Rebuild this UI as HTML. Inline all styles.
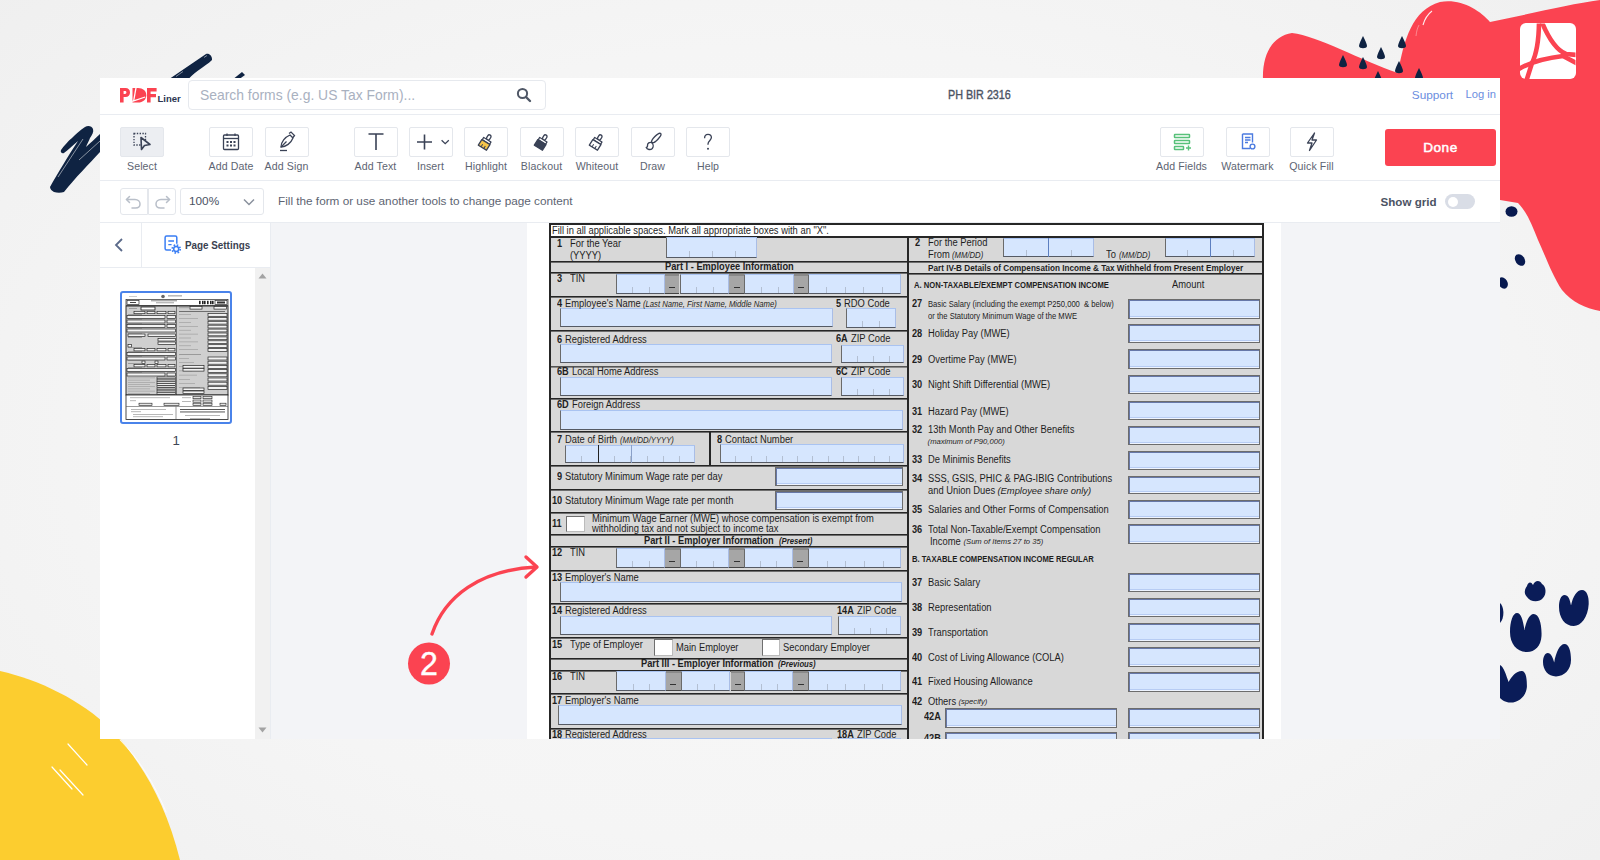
<!DOCTYPE html><html><head><meta charset="utf-8"><style>
*{margin:0;padding:0;box-sizing:border-box}
html,body{width:1600px;height:860px;overflow:hidden}
body{position:relative;background:radial-gradient(ellipse 75% 85% at 50% 52%, #f8f8f8 0%, #f5f5f5 55%, #eeeeee 100%);font-family:"Liberation Sans",sans-serif;color:#333}
.a{position:absolute}
.t{position:absolute;white-space:nowrap}
#app{position:absolute;left:100px;top:78px;width:1400px;height:661px;background:#fff;overflow:hidden}
.tb{position:absolute;top:49px;width:44px;height:30px;border:1px solid #e6e8ed;border-radius:3px;background:#fff}
.tl{position:absolute;top:80px;width:80px;text-align:center;font-size:10.6px;color:#5b6270;line-height:14px}
</style></head><body><svg class="a" style="left:0;top:0" width="1600" height="860" viewBox="0 0 1600 860">
<!-- yellow blob -->
<path d="M0 671 C40 680 80 700 110 728 C140 760 165 800 180 860 L0 860 Z" fill="#fccd2f"/>
<!-- navy strokes top-left -->
<path d="M50 187 C58 173 68 156 78 141 C73 145 68 150 64 153 C62 154 60 152 61 150 C64 146 68 141 72 138 C76 134 80 130 85 127 C88 125 92 126 93 129 C94 132 92 135 90 138 C89 141 87 144 86 147 C90 143 95 139 100 134 L100 152 C90 163 75 178 64 192 C61 193 57 193 54 192 C52 191 50 189 50 187 Z" fill="#0f2342"/>
<path d="M58 177 L83 139" stroke="#fff" stroke-width="0.6" opacity="0.85"/>
<path d="M79 160 L100 141" stroke="#fff" stroke-width="0.6" opacity="0.85"/>
<path d="M170 78.5 L206 54 C209 53 212.5 56 212 60 C208 64 204 66 201 68.5 C196 72 192 75 189 78.5 Z" fill="#0f2342"/><path d="M176 76.5 L183 71.5 M204 57.5 L207 55.5" stroke="#fff" stroke-width="0.6" opacity="0.8"/>
<path d="M232 80 L242 72 L245 75 L238 80 Z" fill="#0f2342"/>
<!-- red blob top-right -->
<path d="M1263 80 C1262 55 1272 36 1292 33 C1318 36 1360 60 1398 73 C1404 40 1412 10 1440 2 C1460 -2 1480 10 1490 22 C1530 14 1570 4 1600 0 L1600 311 C1585 308 1572 302 1562 290 C1552 275 1545 255 1538 240 C1532 225 1527 212 1518 203 L1500 200 L1500 80 Z" fill="#fb4351"/>
<rect x="1520" y="23" width="56" height="56" rx="6" fill="#fff"/>
<path d="M1423 25 C1424.5 19.5 1427.5 14.5 1432 11" stroke="#fff" stroke-width="1.1" fill="none" opacity="0.9"/>
<path d="M1416 36 C1416.5 31 1417.5 28 1419 25" stroke="#fff" stroke-width="0.6" fill="none" opacity="0.6"/>
<!-- navy drops -->
<g fill="#0f2342">
<path d="M1363 36 C1365 40 1367 44 1367 46 C1367 49 1359 49 1359 46 C1359 44 1361 40 1363 36 Z"/><path d="M1402 36 C1404 40 1406 44 1406 46 C1406 49 1398 49 1398 46 C1398 44 1400 40 1402 36 Z"/><path d="M1381 47 C1383 51 1385 55 1385 57 C1385 60 1377 60 1377 57 C1377 55 1379 51 1381 47 Z"/><path d="M1343 55 C1345 59 1347 63 1347 65 C1347 68 1339 68 1339 65 C1339 63 1341 59 1343 55 Z"/><path d="M1363 57 C1365 61 1367 65 1367 67 C1367 70 1359 70 1359 67 C1359 65 1361 61 1363 57 Z"/><path d="M1399 61 C1401 65 1403 69 1403 71 C1403 74 1395 74 1395 71 C1395 69 1397 65 1399 61 Z"/><path d="M1419 68 C1421 72 1423 76 1423 78 C1423 81 1415 81 1415 78 C1415 76 1417 72 1419 68 Z"/><path d="M1378 71 C1380 75 1382 79 1382 81 C1382 84 1374 84 1374 81 C1374 79 1376 75 1378 71 Z"/><ellipse cx="1511.5" cy="211.5" rx="6" ry="5.3" fill="#07194f"/><ellipse cx="1520" cy="260" rx="4.6" ry="6.3" transform="rotate(-35 1520 260)" fill="#07194f"/><ellipse cx="1503" cy="283" rx="4.5" ry="6" transform="rotate(-30 1503 283)" fill="#07194f"/>
</g>
</svg>
<div class="a" style="left:100px;top:78px;width:1400px;height:661px;background:#fff"></div>
<div class="a" style="left:100px;top:114px;width:1400px;height:1px;background:#e9ecf1"></div>
<div class="a" style="left:100px;top:180px;width:1400px;height:1px;background:#e9ecf1"></div>
<div class="a" style="left:100px;top:222px;width:1400px;height:1px;background:#e9ecf1"></div>
<svg class="a" style="left:115px;top:84px" width="50" height="22" viewBox="115 84 50 22">
<path d="M120 88 H125.5 C128.3 88 130 89.8 130 92.4 C130 95 128.3 96.9 125.5 96.9 H123.6 V102.5 H120 Z M123.6 91 V93.9 H125 C125.9 93.9 126.4 93.3 126.4 92.45 C126.4 91.6 125.9 91 125 91 Z" fill="#fb4351"/>
<path d="M132.5 88 H138 C143 88 146.3 91 146.3 95.2 C146.3 99.5 143 102.5 138 102.5 H132.5 Z" fill="#fb4351"/>
<path d="M135.3 88 L136.6 88 L134.3 101 L133 101 Z" fill="#fff"/>
<path d="M136.7 88.5 L139.5 96.5 L134.9 97.8 Z" fill="#fff" opacity="0"/>
<path d="M132 100.8 L145 96.4 L145.4 97.4 L132.4 101.9 Z" fill="#fff"/>
<path d="M147 88 H156.6 V91.4 H150.6 V94 H156 V97.2 H150.6 V102.5 H147 Z" fill="#fb4351"/>
</svg>
<div class="t" style="left:157.5px;top:92.80px;font-size:9.5px;line-height:11.4px;color:#2c3650;font-weight:bold;">Liner</div>
<div class="a" style="left:188px;top:80px;width:358px;height:30px;border:1px solid #e6e9ee;border-radius:4px;background:#fff"></div>
<div class="t" style="left:200px;top:87.16px;font-size:13.9px;line-height:16.68px;color:#a9b1bf;">Search forms (e.g. US Tax Form)...</div>
<svg class="a" style="left:516px;top:87px" width="16" height="16" viewBox="0 0 16 16"><circle cx="6.5" cy="6.5" r="4.6" fill="none" stroke="#4f5766" stroke-width="2"/><path d="M10 10 L14 14" stroke="#4f5766" stroke-width="2.4" stroke-linecap="round"/></svg>
<div class="t" style="left:947.8px;top:88.40px;font-size:12px;line-height:14.4px;transform:scaleX(0.897);transform-origin:0 50%;color:#4b5363;-webkit-text-stroke:0.35px #4b5363;">PH BIR 2316</div>
<div class="t" style="left:1411.8px;top:88.22px;font-size:11.8px;line-height:14.16px;color:#6b8ee0;">Support</div>
<div class="t" style="left:1465.5px;top:88.28px;font-size:11.2px;line-height:13.44px;color:#6b8ee0;">Log in</div>
<div class="a" style="left:120px;top:127px;width:44px;height:30px;border:1px solid #e4e7ec;border-radius:2px;background:#eceef2"></div>
<svg class="a" style="left:120px;top:127px" width="44" height="30" viewBox="0 0 44 30"><rect x="14" y="6.5" width="11.5" height="11.5" stroke="#3a4256" fill="none" stroke-width="1.3" stroke-dasharray="1.4 1.4"/><path d="M21 10.5 L30 17.5 L24.5 18.5 L21.5 22.5 Z" fill="#eceef2" stroke="#3a4256" stroke-width="1.6" stroke-linejoin="round"/></svg>
<div class="t" style="left:102px;top:159.3px;width:80px;text-align:center;font-size:10.6px;letter-spacing:0.1px;line-height:14px;color:#5d6472">Select</div>
<div class="a" style="left:209px;top:127px;width:44px;height:30px;border:1px solid #e4e7ec;border-radius:2px;background:#fff"></div>
<svg class="a" style="left:209px;top:127px" width="44" height="30" viewBox="0 0 44 30"><rect x="14.5" y="8" width="15" height="14.5" rx="1" stroke="#3a4256" fill="none" stroke-width="1.3" stroke-width="1.6"/><path d="M14.5 11.5 H29.5" stroke="#3a4256" fill="none" stroke-width="1.3" stroke-width="1.4"/><path d="M18 6.5 V9 M26 6.5 V9" stroke="#3a4256" fill="none" stroke-width="1.3"/><g fill="#3a4256"><rect x="17.5" y="14" width="2" height="2"/><rect x="21" y="14" width="2" height="2"/><rect x="24.5" y="14" width="2" height="2"/><rect x="17.5" y="17.5" width="2" height="2"/><rect x="21" y="17.5" width="2" height="2"/><rect x="24.5" y="17.5" width="2" height="2"/></g></svg>
<div class="t" style="left:191px;top:159.3px;width:80px;text-align:center;font-size:10.6px;letter-spacing:0.1px;line-height:14px;color:#5d6472">Add Date</div>
<div class="a" style="left:264.5px;top:127px;width:44px;height:30px;border:1px solid #e4e7ec;border-radius:2px;background:#fff"></div>
<svg class="a" style="left:264.5px;top:127px" width="44" height="30" viewBox="0 0 44 30"><path d="M16 20 C16 15 20 10 25 8 L28 11 C26 16 21 20 16 20 Z" stroke="#3a4256" fill="none" stroke-width="1.3" stroke-width="1.5"/><path d="M24 6.5 L26 5 L29.5 8.5 L28 10.5" stroke="#3a4256" fill="none" stroke-width="1.3" stroke-width="1.5"/><path d="M16 20 L21.5 14.5" stroke="#3a4256" fill="none" stroke-width="1.3"/><path d="M15 23.5 H22" stroke="#3a4256" fill="none" stroke-width="1.3" stroke-width="1.5"/></svg>
<div class="t" style="left:246.5px;top:159.3px;width:80px;text-align:center;font-size:10.6px;letter-spacing:0.1px;line-height:14px;color:#5d6472">Add Sign</div>
<div class="a" style="left:353.5px;top:127px;width:44px;height:30px;border:1px solid #e4e7ec;border-radius:2px;background:#fff"></div>
<svg class="a" style="left:353.5px;top:127px" width="44" height="30" viewBox="0 0 44 30"><path d="M14.5 7 H29.5 M22 7 V23" stroke="#3a4256" stroke-width="1.6" fill="none"/></svg>
<div class="t" style="left:335.5px;top:159.3px;width:80px;text-align:center;font-size:10.6px;letter-spacing:0.1px;line-height:14px;color:#5d6472">Add Text</div>
<div class="a" style="left:408.5px;top:127px;width:44px;height:30px;border:1px solid #e4e7ec;border-radius:2px;background:#fff"></div>
<svg class="a" style="left:408.5px;top:127px" width="44" height="30" viewBox="0 0 44 30"><path d="M8 15 H23 M15.5 7.5 V22.5" stroke="#3a4256" stroke-width="1.6" fill="none"/><path d="M32.6 13.2 L36.2 16.6 L39.8 13.2" stroke="#3a4256" fill="none" stroke-width="1.3" stroke-width="1.5"/></svg>
<div class="t" style="left:390.5px;top:159.3px;width:80px;text-align:center;font-size:10.6px;letter-spacing:0.1px;line-height:14px;color:#5d6472">Insert</div>
<div class="a" style="left:464px;top:127px;width:44px;height:30px;border:1px solid #e4e7ec;border-radius:2px;background:#fff"></div>
<svg class="a" style="left:464px;top:127px" width="44" height="30" viewBox="0 0 44 30"><g transform="translate(22.2 14.6) rotate(32)" stroke="#3a4256" stroke-width="1.3" stroke-linejoin="round"><rect x="-1.7" y="-7.6" width="3.4" height="5.4" rx="1.7" fill="#fff"/><rect x="-4.3" y="-2.2" width="8.6" height="2.8" fill="#fff"/><path d="M-4.8 0.6 H4.8 V7.2 H-4.8 Z" fill="#f6c54a"/><path d="M-1.6 7 V4.2 M1.6 7 V4.2" stroke-width="1"/></g></svg>
<div class="t" style="left:446px;top:159.3px;width:80px;text-align:center;font-size:10.6px;letter-spacing:0.1px;line-height:14px;color:#5d6472">Highlight</div>
<div class="a" style="left:519.5px;top:127px;width:44px;height:30px;border:1px solid #e4e7ec;border-radius:2px;background:#fff"></div>
<svg class="a" style="left:519.5px;top:127px" width="44" height="30" viewBox="0 0 44 30"><g transform="translate(22.2 14.6) rotate(32)" stroke="#3a4256" stroke-width="1.3" stroke-linejoin="round"><rect x="-1.7" y="-7.6" width="3.4" height="5.4" rx="1.7" fill="#fff"/><rect x="-4.3" y="-2.2" width="8.6" height="2.8" fill="#fff"/><path d="M-4.8 0.6 H4.8 V7.2 H-4.8 Z" fill="#3a4256"/></g></svg>
<div class="t" style="left:501.5px;top:159.3px;width:80px;text-align:center;font-size:10.6px;letter-spacing:0.1px;line-height:14px;color:#5d6472">Blackout</div>
<div class="a" style="left:575px;top:127px;width:44px;height:30px;border:1px solid #e4e7ec;border-radius:2px;background:#fff"></div>
<svg class="a" style="left:575px;top:127px" width="44" height="30" viewBox="0 0 44 30"><g transform="translate(22.2 14.6) rotate(32)" stroke="#3a4256" stroke-width="1.3" stroke-linejoin="round"><rect x="-1.7" y="-7.6" width="3.4" height="5.4" rx="1.7" fill="#fff"/><rect x="-4.3" y="-2.2" width="8.6" height="2.8" fill="#fff"/><path d="M-4.8 0.6 H4.8 V7.2 H-4.8 Z" fill="#fff"/><path d="M-1.6 7 V4.2 M1.6 7 V4.2" stroke-width="1"/></g></svg>
<div class="t" style="left:557px;top:159.3px;width:80px;text-align:center;font-size:10.6px;letter-spacing:0.1px;line-height:14px;color:#5d6472">Whiteout</div>
<div class="a" style="left:630.5px;top:127px;width:44px;height:30px;border:1px solid #e4e7ec;border-radius:2px;background:#fff"></div>
<svg class="a" style="left:630.5px;top:127px" width="44" height="30" viewBox="0 0 44 30"><g stroke="#3a4256" stroke-width="1.4" fill="none" stroke-linejoin="round"><ellipse cx="25.3" cy="11" rx="6.2" ry="2" transform="rotate(-45 25.3 11)"/><path d="M20.8 15.6 C18.5 14.8 16.3 16.3 16.5 18.6 C16.6 19.8 15.8 20.5 15.2 20.4 C16 22.8 19.6 23.1 21.3 21.4 C22.6 20 22.4 17.4 20.8 15.6 Z"/></g></svg>
<div class="t" style="left:612.5px;top:159.3px;width:80px;text-align:center;font-size:10.6px;letter-spacing:0.1px;line-height:14px;color:#5d6472">Draw</div>
<div class="a" style="left:686px;top:127px;width:44px;height:30px;border:1px solid #e4e7ec;border-radius:2px;background:#fff"></div>
<svg class="a" style="left:686px;top:127px" width="44" height="30" viewBox="0 0 44 30"><path d="M18.6 11.3 C18.6 8.6 20.3 7.4 22 7.4 C23.9 7.4 25.4 8.8 25.4 10.6 C25.4 13.2 22.1 13.8 22 17 V17.8" stroke="#3a4256" fill="none" stroke-width="1.3" stroke-width="1.7"/><circle cx="22" cy="21.7" r="1" fill="#3a4256"/></svg>
<div class="t" style="left:668px;top:159.3px;width:80px;text-align:center;font-size:10.6px;letter-spacing:0.1px;line-height:14px;color:#5d6472">Help</div>
<div class="a" style="left:1159.5px;top:127px;width:44px;height:30px;border:1px solid #e4e7ec;border-radius:2px;background:#fff"></div>
<svg class="a" style="left:1159.5px;top:127px" width="44" height="30" viewBox="0 0 44 30"><g stroke="#58c17a" stroke-width="1.5" fill="none"><rect x="14.5" y="7.5" width="15" height="3" rx=".5"/><rect x="14.5" y="13.5" width="15" height="3" rx=".5"/><rect x="14.5" y="19.5" width="9" height="3" rx=".5"/></g><path d="M26 21 H31 M28.5 18.5 V23.5" stroke="#58c17a" stroke-width="1.4"/></svg>
<div class="t" style="left:1141.5px;top:159.3px;width:80px;text-align:center;font-size:10.6px;letter-spacing:0.1px;line-height:14px;color:#5d6472">Add Fields</div>
<div class="a" style="left:1225.5px;top:127px;width:44px;height:30px;border:1px solid #e4e7ec;border-radius:2px;background:#fff"></div>
<svg class="a" style="left:1225.5px;top:127px" width="44" height="30" viewBox="0 0 44 30"><g stroke="#4b7be0" stroke-width="1.4" fill="none"><path d="M16.5 7 H26.5 V15.5 M24 21.5 H16.5 V7"/><path d="M19 10.5 H24.5 M19 13 H24.5 M19 15.5 H22"/><circle cx="26.5" cy="19.5" r="2.4"/></g></svg>
<div class="t" style="left:1207.5px;top:159.3px;width:80px;text-align:center;font-size:10.6px;letter-spacing:0.1px;line-height:14px;color:#5d6472">Watermark</div>
<div class="a" style="left:1289.5px;top:127px;width:44px;height:30px;border:1px solid #e4e7ec;border-radius:2px;background:#fff"></div>
<svg class="a" style="left:1289.5px;top:127px" width="44" height="30" viewBox="0 0 44 30"><path d="M24.5 6 L17.5 16 H22 L19.5 23.5 L26.5 13 H22 Z" stroke="#3a4256" fill="none" stroke-width="1.3" stroke-width="1.4" stroke-linejoin="round"/></svg>
<div class="t" style="left:1271.5px;top:159.3px;width:80px;text-align:center;font-size:10.6px;letter-spacing:0.1px;line-height:14px;color:#5d6472">Quick Fill</div>
<div class="a" style="left:1385px;top:129px;width:111px;height:37px;background:#fb4351;border-radius:3px;color:#fff;font-size:13.6px;letter-spacing:0.55px;-webkit-text-stroke:0.5px #fff;line-height:37px;text-align:center">Done</div>
<div class="a" style="left:120px;top:188px;width:28px;height:27px;border:1px solid #e4e7ec;border-radius:3px 0 0 3px"></div>
<div class="a" style="left:148px;top:188px;width:28px;height:27px;border:1px solid #e4e7ec;border-radius:0 3px 3px 0"></div>
<svg class="a" style="left:120px;top:188px" width="56" height="27" viewBox="0 0 56 27"><g stroke="#b9bfc9" stroke-width="1.5" fill="none" stroke-linecap="round"><path d="M9.5 8.5 L6.5 11.5 L9.5 14.5"/><path d="M7 11.5 H15 C18 11.5 20 13.5 20 16 C20 18.5 18 20 15.5 20 H12"/><path d="M46.5 8.5 L49.5 11.5 L46.5 14.5"/><path d="M49 11.5 H41 C38 11.5 36 13.5 36 16 C36 18.5 38 20 40.5 20 H44"/></g></svg>
<div class="a" style="left:180px;top:188px;width:84px;height:27px;border:1px solid #e4e7ec;border-radius:3px"></div>
<div class="t" style="left:189px;top:194.42px;font-size:11.8px;line-height:14.16px;color:#4b5363;">100%</div>
<svg class="a" style="left:242px;top:197px" width="14" height="10" viewBox="0 0 14 10"><path d="M2 2.5 L7 7.5 L12 2.5" stroke="#8a919d" stroke-width="1.5" fill="none"/></svg>
<div class="t" style="left:278px;top:194.45px;font-size:11.75px;line-height:14.1px;color:#5d6472;">Fill the form or use another tools to change page content</div>
<div class="t" style="left:1380.5px;top:194.54px;font-size:11.6px;line-height:13.92px;color:#4b5363;font-weight:bold;">Show grid</div>
<div class="a" style="left:1445px;top:194px;width:30px;height:15px;background:#d9dde6;border-radius:8px"></div>
<div class="a" style="left:1448px;top:196.5px;width:10px;height:10px;background:#fff;border-radius:50%"></div>
<div class="a" style="left:270px;top:223px;width:1px;height:516px;background:#e9ecf1"></div>
<div class="a" style="left:141px;top:223px;width:1px;height:45px;background:#e9ecf1"></div>
<div class="a" style="left:100px;top:267px;width:170px;height:1px;background:#e9ecf1"></div>
<svg class="a" style="left:112px;top:237px" width="14" height="16" viewBox="0 0 14 16"><path d="M10 2 L4 8 L10 14" stroke="#5b6a8a" stroke-width="1.8" fill="none"/></svg>
<svg class="a" style="left:160px;top:232px" width="26" height="26" viewBox="160 232 26 26"><g stroke="#3a7ef4" fill="none"><path d="M176.8 243.8 V237.6 C176.8 236.7 176.2 236.1 175.3 236.1 H166.6 C165.7 236.1 165.1 236.7 165.1 237.6 V248.6 C165.1 249.5 165.7 250.1 166.6 250.1 H171" stroke-width="1.5"/><path d="M168.3 241 H174 M168.3 244.6 H171.6" stroke-width="1.4"/><circle cx="176.2" cy="249" r="2.5" stroke-width="1.5"/><circle cx="176.2" cy="249" r="4" stroke-width="1.7" stroke-dasharray="1.6 1.55"/></g></svg>
<div class="t" style="left:185px;top:239.14px;font-size:10.6px;line-height:12.72px;transform:scaleX(0.930);transform-origin:0 50%;color:#3a4150;font-weight:bold;">Page Settings</div>
<div class="a" style="left:255px;top:268px;width:15px;height:471px;background:#f1f1f1"></div>
<svg class="a" style="left:258px;top:273px" width="9" height="6" viewBox="0 0 9 6"><path d="M0.5 5.5 L4.5 0.5 L8.5 5.5 Z" fill="#a3a3a3"/></svg>
<svg class="a" style="left:258px;top:727px" width="9" height="6" viewBox="0 0 9 6"><path d="M0.5 0.5 L4.5 5.5 L8.5 0.5 Z" fill="#a3a3a3"/></svg>
<div class="t" style="left:172.5px;top:433.08px;font-size:13.2px;line-height:15.84px;color:#3f4654;">1</div>
<div class="a" style="left:271px;top:223px;width:1229px;height:516px;background:#f3f4f7"></div>
<div class="a" style="left:527px;top:223px;width:754px;height:516px;background:#fff"></div>
<div class="a" style="left:271px;top:223px;width:1229px;height:516px;overflow:hidden"><div class="a" style="left:-271px;top:-223px;width:1600px;height:860px">
<div class="a" style="left:551px;top:237px;width:356px;height:502px;background:#d8d8d8"></div>
<div class="a" style="left:909px;top:237px;width:353px;height:502px;background:#d8d8d8"></div>
<div class="a" style="left:549px;top:223px;width:715px;height:2px;background:#262626"></div>
<div class="a" style="left:549px;top:223px;width:2px;height:516px;background:#262626"></div>
<div class="a" style="left:1262px;top:223px;width:2px;height:516px;background:#262626"></div>
<div class="a" style="left:549px;top:236px;width:715px;height:2px;background:#262626"></div>
<div class="a" style="left:907px;top:236px;width:2px;height:503px;background:#262626"></div>
<div class="a" style="left:551px;top:261px;width:356px;height:1px;background:#262626"></div>
<div class="a" style="left:551px;top:262px;width:356px;height:1px;background:#6e6e6e"></div>
<div class="a" style="left:551px;top:272px;width:356px;height:1px;background:#262626"></div>
<div class="a" style="left:551px;top:273px;width:356px;height:1px;background:#6e6e6e"></div>
<div class="a" style="left:551px;top:296px;width:356px;height:1px;background:#262626"></div>
<div class="a" style="left:551px;top:297px;width:356px;height:1px;background:#6e6e6e"></div>
<div class="a" style="left:551px;top:330px;width:356px;height:1px;background:#262626"></div>
<div class="a" style="left:551px;top:331px;width:356px;height:1px;background:#6e6e6e"></div>
<div class="a" style="left:551px;top:366px;width:356px;height:1px;background:#555"></div>
<div class="a" style="left:551px;top:367px;width:356px;height:1px;background:#8a8a8a"></div>
<div class="a" style="left:551px;top:398px;width:356px;height:1px;background:#262626"></div>
<div class="a" style="left:551px;top:399px;width:356px;height:1px;background:#6e6e6e"></div>
<div class="a" style="left:551px;top:431px;width:356px;height:1px;background:#262626"></div>
<div class="a" style="left:551px;top:432px;width:356px;height:1px;background:#6e6e6e"></div>
<div class="a" style="left:551px;top:465px;width:356px;height:1px;background:#262626"></div>
<div class="a" style="left:551px;top:466px;width:356px;height:1px;background:#6e6e6e"></div>
<div class="a" style="left:551px;top:489px;width:356px;height:1px;background:#262626"></div>
<div class="a" style="left:551px;top:490px;width:356px;height:1px;background:#6e6e6e"></div>
<div class="a" style="left:551px;top:512px;width:356px;height:1px;background:#262626"></div>
<div class="a" style="left:551px;top:513px;width:356px;height:1px;background:#6e6e6e"></div>
<div class="a" style="left:551px;top:534px;width:356px;height:1px;background:#262626"></div>
<div class="a" style="left:551px;top:535px;width:356px;height:1px;background:#6e6e6e"></div>
<div class="a" style="left:551px;top:546px;width:356px;height:1px;background:#262626"></div>
<div class="a" style="left:551px;top:547px;width:356px;height:1px;background:#6e6e6e"></div>
<div class="a" style="left:551px;top:570px;width:356px;height:1px;background:#262626"></div>
<div class="a" style="left:551px;top:571px;width:356px;height:1px;background:#6e6e6e"></div>
<div class="a" style="left:551px;top:603px;width:356px;height:1px;background:#262626"></div>
<div class="a" style="left:551px;top:604px;width:356px;height:1px;background:#6e6e6e"></div>
<div class="a" style="left:551px;top:637px;width:356px;height:1px;background:#262626"></div>
<div class="a" style="left:551px;top:638px;width:356px;height:1px;background:#6e6e6e"></div>
<div class="a" style="left:551px;top:658px;width:356px;height:1px;background:#262626"></div>
<div class="a" style="left:551px;top:659px;width:356px;height:1px;background:#6e6e6e"></div>
<div class="a" style="left:551px;top:670px;width:356px;height:1px;background:#262626"></div>
<div class="a" style="left:551px;top:671px;width:356px;height:1px;background:#6e6e6e"></div>
<div class="a" style="left:551px;top:693px;width:356px;height:1px;background:#262626"></div>
<div class="a" style="left:551px;top:694px;width:356px;height:1px;background:#6e6e6e"></div>
<div class="a" style="left:551px;top:728px;width:356px;height:1px;background:#262626"></div>
<div class="a" style="left:551px;top:729px;width:356px;height:1px;background:#6e6e6e"></div>
<div class="a" style="left:909px;top:261px;width:353px;height:1px;background:#262626"></div>
<div class="a" style="left:909px;top:262px;width:353px;height:1px;background:#6e6e6e"></div>
<div class="a" style="left:909px;top:273px;width:353px;height:1px;background:#262626"></div>
<div class="a" style="left:909px;top:274px;width:353px;height:1px;background:#6e6e6e"></div>
<div class="a" style="left:709px;top:431px;width:2px;height:35px;background:#262626"></div>
<div class="a" style="left:665.7px;top:237.4px;width:91.7px;height:20.3px;background:#d6e6fe;border-left:1px solid #6a6a6a;border-top:1px solid #a9c3f1;border-bottom:1px solid #555a64;border-right:1px solid #a9bde6;"></div>
<div class="a" style="left:688.6px;top:250.7px;width:1px;height:6px;background:#b3bfd2"></div>
<div class="a" style="left:711.5px;top:250.7px;width:1px;height:6px;background:#b3bfd2"></div>
<div class="a" style="left:734.5px;top:250.7px;width:1px;height:6px;background:#b3bfd2"></div>
<div class="a" style="left:615.9px;top:273.6px;width:49.4px;height:20.7px;background:#d6e6fe;border-left:1px solid #6a6a6a;border-top:1px solid #a9c3f1;border-bottom:1px solid #555a64;border-right:1px solid #a9bde6;"></div>
<div class="a" style="left:632.4px;top:287.3px;width:1px;height:6px;background:#b3bfd2"></div>
<div class="a" style="left:648.8px;top:287.3px;width:1px;height:6px;background:#b3bfd2"></div>
<div class="a" style="left:665.3px;top:273.6px;width:14.2px;height:20.7px;background:#a6a6a6;border-top:2px solid #8a8a8a;border-bottom:1px solid #444"></div>
<div class="a" style="left:669.4px;top:287.3px;width:6px;height:1px;background:#333"></div>
<div class="a" style="left:679.5px;top:273.6px;width:49.5px;height:20.7px;background:#d6e6fe;border-left:1px solid #6a6a6a;border-top:1px solid #a9c3f1;border-bottom:1px solid #555a64;border-right:1px solid #a9bde6;"></div>
<div class="a" style="left:696.0px;top:287.3px;width:1px;height:6px;background:#b3bfd2"></div>
<div class="a" style="left:712.5px;top:287.3px;width:1px;height:6px;background:#b3bfd2"></div>
<div class="a" style="left:729px;top:273.6px;width:15.4px;height:20.7px;background:#a6a6a6;border-top:2px solid #8a8a8a;border-bottom:1px solid #444"></div>
<div class="a" style="left:733.7px;top:287.3px;width:6px;height:1px;background:#333"></div>
<div class="a" style="left:744.4px;top:273.6px;width:49.6px;height:20.7px;background:#d6e6fe;border-left:1px solid #6a6a6a;border-top:1px solid #a9c3f1;border-bottom:1px solid #555a64;border-right:1px solid #a9bde6;"></div>
<div class="a" style="left:760.9px;top:287.3px;width:1px;height:6px;background:#b3bfd2"></div>
<div class="a" style="left:777.5px;top:287.3px;width:1px;height:6px;background:#b3bfd2"></div>
<div class="a" style="left:794px;top:273.6px;width:13.6px;height:20.7px;background:#a6a6a6;border-top:2px solid #8a8a8a;border-bottom:1px solid #444"></div>
<div class="a" style="left:797.8px;top:287.3px;width:6px;height:1px;background:#333"></div>
<div class="a" style="left:807.6px;top:273.6px;width:93.0px;height:20.7px;background:#d6e6fe;border-left:1px solid #6a6a6a;border-top:1px solid #a9c3f1;border-bottom:1px solid #555a64;border-right:1px solid #a9bde6;"></div>
<div class="a" style="left:826.2px;top:287.3px;width:1px;height:6px;background:#b3bfd2"></div>
<div class="a" style="left:844.8px;top:287.3px;width:1px;height:6px;background:#b3bfd2"></div>
<div class="a" style="left:863.4px;top:287.3px;width:1px;height:6px;background:#b3bfd2"></div>
<div class="a" style="left:882.0px;top:287.3px;width:1px;height:6px;background:#b3bfd2"></div>
<div class="a" style="left:559.6px;top:308.2px;width:273.1px;height:19.2px;background:#d6e6fe;border-left:1px solid #6a6a6a;border-top:1px solid #a9c3f1;border-bottom:1px solid #555a64;border-right:1px solid #a9bde6;"></div>
<div class="a" style="left:845.5px;top:308px;width:50.3px;height:19.5px;background:#d6e6fe;border-left:1px solid #6a6a6a;border-top:1px solid #a9c3f1;border-bottom:1px solid #555a64;border-right:1px solid #a9bde6;"></div>
<div class="a" style="left:862.3px;top:320.5px;width:1px;height:6px;background:#b3bfd2"></div>
<div class="a" style="left:879.0px;top:320.5px;width:1px;height:6px;background:#b3bfd2"></div>
<div class="a" style="left:559.8px;top:344.2px;width:272.7px;height:18.8px;background:#d6e6fe;border-left:1px solid #6a6a6a;border-top:1px solid #a9c3f1;border-bottom:1px solid #555a64;border-right:1px solid #a9bde6;"></div>
<div class="a" style="left:841.3px;top:344.5px;width:63.0px;height:18.5px;background:#d6e6fe;border-left:1px solid #6a6a6a;border-top:1px solid #a9c3f1;border-bottom:1px solid #555a64;border-right:1px solid #a9bde6;"></div>
<div class="a" style="left:857.0px;top:356px;width:1px;height:6px;background:#b3bfd2"></div>
<div class="a" style="left:872.8px;top:356px;width:1px;height:6px;background:#b3bfd2"></div>
<div class="a" style="left:888.5px;top:356px;width:1px;height:6px;background:#b3bfd2"></div>
<div class="a" style="left:559.8px;top:376.8px;width:272.7px;height:19.4px;background:#d6e6fe;border-left:1px solid #6a6a6a;border-top:1px solid #a9c3f1;border-bottom:1px solid #555a64;border-right:1px solid #a9bde6;"></div>
<div class="a" style="left:841.3px;top:377px;width:63.0px;height:18.5px;background:#d6e6fe;border-left:1px solid #6a6a6a;border-top:1px solid #a9c3f1;border-bottom:1px solid #555a64;border-right:1px solid #a9bde6;"></div>
<div class="a" style="left:857.0px;top:388.5px;width:1px;height:6px;background:#b3bfd2"></div>
<div class="a" style="left:872.8px;top:388.5px;width:1px;height:6px;background:#b3bfd2"></div>
<div class="a" style="left:888.5px;top:388.5px;width:1px;height:6px;background:#b3bfd2"></div>
<div class="a" style="left:559.8px;top:409.6px;width:343.7px;height:20.1px;background:#d6e6fe;border-left:1px solid #6a6a6a;border-top:1px solid #a9c3f1;border-bottom:1px solid #555a64;border-right:1px solid #a9bde6;"></div>
<div class="a" style="left:565px;top:444.5px;width:130.4px;height:18.3px;background:#d6e6fe;border-left:1px solid #6a6a6a;border-top:1px solid #a9c3f1;border-bottom:1px solid #555a64;border-right:1px solid #a9bde6;"></div>
<div class="a" style="left:581.3px;top:455.8px;width:1px;height:6px;background:#b3bfd2"></div>
<div class="a" style="left:597.6px;top:455.8px;width:1px;height:6px;background:#b3bfd2"></div>
<div class="a" style="left:613.9px;top:455.8px;width:1px;height:6px;background:#b3bfd2"></div>
<div class="a" style="left:630.2px;top:455.8px;width:1px;height:6px;background:#b3bfd2"></div>
<div class="a" style="left:646.5px;top:455.8px;width:1px;height:6px;background:#b3bfd2"></div>
<div class="a" style="left:662.8px;top:455.8px;width:1px;height:6px;background:#b3bfd2"></div>
<div class="a" style="left:679.1px;top:455.8px;width:1px;height:6px;background:#b3bfd2"></div>
<div class="a" style="left:598px;top:444.5px;width:1.2px;height:18.3px;background:#222"></div>
<div class="a" style="left:630.5px;top:444.5px;width:1px;height:18.3px;background:#8aa0c8"></div>
<div class="a" style="left:720px;top:444.2px;width:184.4px;height:19.2px;background:#d6e6fe;border-left:1px solid #6a6a6a;border-top:1px solid #a9c3f1;border-bottom:1px solid #555a64;border-right:1px solid #a9bde6;"></div>
<div class="a" style="left:735.4px;top:456.4px;width:1px;height:6px;background:#b3bfd2"></div>
<div class="a" style="left:750.7px;top:456.4px;width:1px;height:6px;background:#b3bfd2"></div>
<div class="a" style="left:766.1px;top:456.4px;width:1px;height:6px;background:#b3bfd2"></div>
<div class="a" style="left:781.5px;top:456.4px;width:1px;height:6px;background:#b3bfd2"></div>
<div class="a" style="left:796.8px;top:456.4px;width:1px;height:6px;background:#b3bfd2"></div>
<div class="a" style="left:812.2px;top:456.4px;width:1px;height:6px;background:#b3bfd2"></div>
<div class="a" style="left:827.6px;top:456.4px;width:1px;height:6px;background:#b3bfd2"></div>
<div class="a" style="left:842.9px;top:456.4px;width:1px;height:6px;background:#b3bfd2"></div>
<div class="a" style="left:858.3px;top:456.4px;width:1px;height:6px;background:#b3bfd2"></div>
<div class="a" style="left:873.7px;top:456.4px;width:1px;height:6px;background:#b3bfd2"></div>
<div class="a" style="left:889.0px;top:456.4px;width:1px;height:6px;background:#b3bfd2"></div>
<div class="a" style="left:775.3px;top:466.8px;width:127.3px;height:19.6px;background:#d6e6fe;border:1px solid #6c6c6c;box-shadow:inset 1px 1px 0 #6778a8, inset 0 -1px 0 #eef4ff, inset 0 -2px 0 #b7ccf3;"></div>
<div class="a" style="left:775.3px;top:490.9px;width:127.3px;height:19.5px;background:#d6e6fe;border:1px solid #6c6c6c;box-shadow:inset 1px 1px 0 #6778a8, inset 0 -1px 0 #eef4ff, inset 0 -2px 0 #b7ccf3;"></div>
<div class="a" style="left:566px;top:515.5px;width:19px;height:16.5px;background:#fff;border:1px solid #6f6f6f;border-right-color:#bbb;border-bottom-color:#bbb"></div>
<div class="a" style="left:615.6px;top:548px;width:49.4px;height:19.5px;background:#d6e6fe;border-left:1px solid #6a6a6a;border-top:1px solid #a9c3f1;border-bottom:1px solid #555a64;border-right:1px solid #a9bde6;"></div>
<div class="a" style="left:632.1px;top:560.5px;width:1px;height:6px;background:#b3bfd2"></div>
<div class="a" style="left:648.5px;top:560.5px;width:1px;height:6px;background:#b3bfd2"></div>
<div class="a" style="left:665px;top:548px;width:14.7px;height:19.5px;background:#a6a6a6;border-top:2px solid #8a8a8a;border-bottom:1px solid #444"></div>
<div class="a" style="left:669.4px;top:560.9px;width:6px;height:1px;background:#333"></div>
<div class="a" style="left:679.7px;top:548px;width:49.6px;height:19.5px;background:#d6e6fe;border-left:1px solid #6a6a6a;border-top:1px solid #a9c3f1;border-bottom:1px solid #555a64;border-right:1px solid #a9bde6;"></div>
<div class="a" style="left:696.2px;top:560.5px;width:1px;height:6px;background:#b3bfd2"></div>
<div class="a" style="left:712.8px;top:560.5px;width:1px;height:6px;background:#b3bfd2"></div>
<div class="a" style="left:729.3px;top:548px;width:14.3px;height:19.5px;background:#a6a6a6;border-top:2px solid #8a8a8a;border-bottom:1px solid #444"></div>
<div class="a" style="left:733.5px;top:560.9px;width:6px;height:1px;background:#333"></div>
<div class="a" style="left:743.6px;top:548px;width:49.2px;height:19.5px;background:#d6e6fe;border-left:1px solid #6a6a6a;border-top:1px solid #a9c3f1;border-bottom:1px solid #555a64;border-right:1px solid #a9bde6;"></div>
<div class="a" style="left:760.0px;top:560.5px;width:1px;height:6px;background:#b3bfd2"></div>
<div class="a" style="left:776.4px;top:560.5px;width:1px;height:6px;background:#b3bfd2"></div>
<div class="a" style="left:792.8px;top:548px;width:15.2px;height:19.5px;background:#a6a6a6;border-top:2px solid #8a8a8a;border-bottom:1px solid #444"></div>
<div class="a" style="left:797.4px;top:560.9px;width:6px;height:1px;background:#333"></div>
<div class="a" style="left:808px;top:548px;width:93.4px;height:19.5px;background:#d6e6fe;border-left:1px solid #6a6a6a;border-top:1px solid #a9c3f1;border-bottom:1px solid #555a64;border-right:1px solid #a9bde6;"></div>
<div class="a" style="left:826.7px;top:560.5px;width:1px;height:6px;background:#b3bfd2"></div>
<div class="a" style="left:845.4px;top:560.5px;width:1px;height:6px;background:#b3bfd2"></div>
<div class="a" style="left:864.0px;top:560.5px;width:1px;height:6px;background:#b3bfd2"></div>
<div class="a" style="left:882.7px;top:560.5px;width:1px;height:6px;background:#b3bfd2"></div>
<div class="a" style="left:559.8px;top:582.1px;width:342.7px;height:19.5px;background:#d6e6fe;border-left:1px solid #6a6a6a;border-top:1px solid #a9c3f1;border-bottom:1px solid #555a64;border-right:1px solid #a9bde6;"></div>
<div class="a" style="left:559.8px;top:615.6px;width:272.2px;height:19.2px;background:#d6e6fe;border-left:1px solid #6a6a6a;border-top:1px solid #a9c3f1;border-bottom:1px solid #555a64;border-right:1px solid #a9bde6;"></div>
<div class="a" style="left:838.3px;top:616px;width:63.1px;height:18.8px;background:#d6e6fe;border-left:1px solid #6a6a6a;border-top:1px solid #a9c3f1;border-bottom:1px solid #555a64;border-right:1px solid #a9bde6;"></div>
<div class="a" style="left:854.1px;top:627.8px;width:1px;height:6px;background:#b3bfd2"></div>
<div class="a" style="left:869.8px;top:627.8px;width:1px;height:6px;background:#b3bfd2"></div>
<div class="a" style="left:885.6px;top:627.8px;width:1px;height:6px;background:#b3bfd2"></div>
<div class="a" style="left:654px;top:638.6px;width:19px;height:17px;background:#fff;border:1px solid #6f6f6f;border-right-color:#bbb;border-bottom-color:#bbb"></div>
<div class="a" style="left:762.4px;top:638.6px;width:18px;height:17px;background:#fff;border:1px solid #6f6f6f;border-right-color:#bbb;border-bottom-color:#bbb"></div>
<div class="a" style="left:616.2px;top:671.4px;width:49.5px;height:19.6px;background:#d6e6fe;border-left:1px solid #6a6a6a;border-top:1px solid #a9c3f1;border-bottom:1px solid #555a64;border-right:1px solid #a9bde6;"></div>
<div class="a" style="left:632.7px;top:684px;width:1px;height:6px;background:#b3bfd2"></div>
<div class="a" style="left:649.2px;top:684px;width:1px;height:6px;background:#b3bfd2"></div>
<div class="a" style="left:665.7px;top:671.4px;width:15.0px;height:19.6px;background:#a6a6a6;border-top:2px solid #8a8a8a;border-bottom:1px solid #444"></div>
<div class="a" style="left:670.2px;top:684.3px;width:6px;height:1px;background:#333"></div>
<div class="a" style="left:680.7px;top:671.4px;width:49.8px;height:19.6px;background:#d6e6fe;border-left:1px solid #6a6a6a;border-top:1px solid #a9c3f1;border-bottom:1px solid #555a64;border-right:1px solid #a9bde6;"></div>
<div class="a" style="left:697.3px;top:684px;width:1px;height:6px;background:#b3bfd2"></div>
<div class="a" style="left:713.9px;top:684px;width:1px;height:6px;background:#b3bfd2"></div>
<div class="a" style="left:730.5px;top:671.4px;width:13.9px;height:19.6px;background:#a6a6a6;border-top:2px solid #8a8a8a;border-bottom:1px solid #444"></div>
<div class="a" style="left:734.5px;top:684.3px;width:6px;height:1px;background:#333"></div>
<div class="a" style="left:744.4px;top:671.4px;width:48.9px;height:19.6px;background:#d6e6fe;border-left:1px solid #6a6a6a;border-top:1px solid #a9c3f1;border-bottom:1px solid #555a64;border-right:1px solid #a9bde6;"></div>
<div class="a" style="left:760.7px;top:684px;width:1px;height:6px;background:#b3bfd2"></div>
<div class="a" style="left:777.0px;top:684px;width:1px;height:6px;background:#b3bfd2"></div>
<div class="a" style="left:793.3px;top:671.4px;width:14.7px;height:19.6px;background:#a6a6a6;border-top:2px solid #8a8a8a;border-bottom:1px solid #444"></div>
<div class="a" style="left:797.6px;top:684.3px;width:6px;height:1px;background:#333"></div>
<div class="a" style="left:808px;top:671.4px;width:92.5px;height:19.6px;background:#d6e6fe;border-left:1px solid #6a6a6a;border-top:1px solid #a9c3f1;border-bottom:1px solid #555a64;border-right:1px solid #a9bde6;"></div>
<div class="a" style="left:826.5px;top:684px;width:1px;height:6px;background:#b3bfd2"></div>
<div class="a" style="left:845.0px;top:684px;width:1px;height:6px;background:#b3bfd2"></div>
<div class="a" style="left:863.5px;top:684px;width:1px;height:6px;background:#b3bfd2"></div>
<div class="a" style="left:882.0px;top:684px;width:1px;height:6px;background:#b3bfd2"></div>
<div class="a" style="left:558.1px;top:705.2px;width:344.2px;height:20.3px;background:#d6e6fe;border-left:1px solid #6a6a6a;border-top:1px solid #a9c3f1;border-bottom:1px solid #555a64;border-right:1px solid #a9bde6;"></div>
<div class="a" style="left:559.8px;top:738px;width:272.2px;height:22px;background:#d6e6fe;border-left:1px solid #6a6a6a;border-top:1px solid #a9c3f1;border-bottom:1px solid #555a64;border-right:1px solid #a9bde6;"></div>
<div class="a" style="left:838.3px;top:738px;width:63.1px;height:22px;background:#d6e6fe;border-left:1px solid #6a6a6a;border-top:1px solid #a9c3f1;border-bottom:1px solid #555a64;border-right:1px solid #a9bde6;"></div>
<div class="t" style="left:552px;top:225.00px;font-size:10.0px;line-height:12.0px;transform:scaleX(0.937);transform-origin:0 50%;color:#1e1e1e;">Fill in all applicable spaces. Mark all appropriate boxes with an "X".</div>
<div class="t" style="left:557px;top:237.50px;font-size:10.0px;line-height:12.0px;transform:scaleX(0.920);transform-origin:0 50%;color:#1e1e1e;font-weight:bold;">1</div>
<div class="t" style="left:569.8px;top:237.50px;font-size:10.0px;line-height:12.0px;transform:scaleX(0.937);transform-origin:0 50%;color:#1e1e1e;">For the Year</div>
<div class="t" style="left:569.8px;top:250.10px;font-size:10.0px;line-height:12.0px;transform:scaleX(0.937);transform-origin:0 50%;color:#1e1e1e;">(YYYY)</div>
<div class="t" style="left:664.5px;top:261.06px;font-size:10.4px;line-height:12.48px;transform:scaleX(0.892);transform-origin:0 50%;color:#1e1e1e;font-weight:bold;">Part I - Employee Information</div>
<div class="t" style="left:557px;top:273.10px;font-size:10.0px;line-height:12.0px;transform:scaleX(0.920);transform-origin:0 50%;color:#1e1e1e;font-weight:bold;">3</div>
<div class="t" style="left:570px;top:273.10px;font-size:10.0px;line-height:12.0px;transform:scaleX(0.937);transform-origin:0 50%;color:#1e1e1e;">TIN</div>
<div class="t" style="left:556.5px;top:298.20px;font-size:10.0px;line-height:12.0px;transform:scaleX(0.920);transform-origin:0 50%;color:#1e1e1e;font-weight:bold;">4</div>
<div class="t" style="left:565px;top:298.20px;font-size:10.0px;line-height:12.0px;transform:scaleX(0.937);transform-origin:0 50%;color:#1e1e1e;">Employee's Name</div>
<div class="t" style="left:643px;top:299.88px;font-size:8.2px;line-height:9.84px;transform:scaleX(0.940);transform-origin:0 50%;color:#1e1e1e;font-style:italic;">(Last Name, First Name, Middle Name)</div>
<div class="t" style="left:835.8px;top:298.30px;font-size:10.0px;line-height:12.0px;transform:scaleX(0.920);transform-origin:0 50%;color:#1e1e1e;font-weight:bold;">5</div>
<div class="t" style="left:843.5px;top:298.30px;font-size:10.0px;line-height:12.0px;transform:scaleX(0.937);transform-origin:0 50%;color:#1e1e1e;">RDO Code</div>
<div class="t" style="left:557px;top:333.50px;font-size:10.0px;line-height:12.0px;transform:scaleX(0.920);transform-origin:0 50%;color:#1e1e1e;font-weight:bold;">6</div>
<div class="t" style="left:565px;top:333.50px;font-size:10.0px;line-height:12.0px;transform:scaleX(0.937);transform-origin:0 50%;color:#1e1e1e;">Registered Address</div>
<div class="t" style="left:835.8px;top:333.20px;font-size:10.0px;line-height:12.0px;transform:scaleX(0.920);transform-origin:0 50%;color:#1e1e1e;font-weight:bold;">6A</div>
<div class="t" style="left:851px;top:333.20px;font-size:10.0px;line-height:12.0px;transform:scaleX(0.937);transform-origin:0 50%;color:#1e1e1e;">ZIP Code</div>
<div class="t" style="left:557px;top:366.20px;font-size:10.0px;line-height:12.0px;transform:scaleX(0.920);transform-origin:0 50%;color:#1e1e1e;font-weight:bold;">6B</div>
<div class="t" style="left:572px;top:366.20px;font-size:10.0px;line-height:12.0px;transform:scaleX(0.937);transform-origin:0 50%;color:#1e1e1e;">Local Home Address</div>
<div class="t" style="left:835.8px;top:366.00px;font-size:10.0px;line-height:12.0px;transform:scaleX(0.920);transform-origin:0 50%;color:#1e1e1e;font-weight:bold;">6C</div>
<div class="t" style="left:851px;top:366.00px;font-size:10.0px;line-height:12.0px;transform:scaleX(0.937);transform-origin:0 50%;color:#1e1e1e;">ZIP Code</div>
<div class="t" style="left:557px;top:399.40px;font-size:10.0px;line-height:12.0px;transform:scaleX(0.920);transform-origin:0 50%;color:#1e1e1e;font-weight:bold;">6D</div>
<div class="t" style="left:572px;top:399.40px;font-size:10.0px;line-height:12.0px;transform:scaleX(0.937);transform-origin:0 50%;color:#1e1e1e;">Foreign Address</div>
<div class="t" style="left:557px;top:434.30px;font-size:10.0px;line-height:12.0px;transform:scaleX(0.920);transform-origin:0 50%;color:#1e1e1e;font-weight:bold;">7</div>
<div class="t" style="left:565px;top:434.30px;font-size:10.0px;line-height:12.0px;transform:scaleX(0.937);transform-origin:0 50%;color:#1e1e1e;">Date of Birth</div>
<div class="t" style="left:620px;top:435.98px;font-size:8.2px;line-height:9.84px;transform:scaleX(0.940);transform-origin:0 50%;color:#1e1e1e;font-style:italic;">(MM/DD/YYYY)</div>
<div class="t" style="left:716.8px;top:434.30px;font-size:10.0px;line-height:12.0px;transform:scaleX(0.920);transform-origin:0 50%;color:#1e1e1e;font-weight:bold;">8</div>
<div class="t" style="left:724.5px;top:434.30px;font-size:10.0px;line-height:12.0px;transform:scaleX(0.937);transform-origin:0 50%;color:#1e1e1e;">Contact Number</div>
<div class="t" style="left:557px;top:471.40px;font-size:10.0px;line-height:12.0px;transform:scaleX(0.920);transform-origin:0 50%;color:#1e1e1e;font-weight:bold;">9</div>
<div class="t" style="left:565px;top:471.40px;font-size:10.0px;line-height:12.0px;transform:scaleX(0.937);transform-origin:0 50%;color:#1e1e1e;">Statutory Minimum Wage rate per day</div>
<div class="t" style="left:552.3px;top:495.00px;font-size:10.0px;line-height:12.0px;transform:scaleX(0.920);transform-origin:0 50%;color:#1e1e1e;font-weight:bold;">10</div>
<div class="t" style="left:565px;top:495.00px;font-size:10.0px;line-height:12.0px;transform:scaleX(0.937);transform-origin:0 50%;color:#1e1e1e;">Statutory Minimum Wage rate per month</div>
<div class="t" style="left:552.3px;top:517.60px;font-size:10.0px;line-height:12.0px;transform:scaleX(0.920);transform-origin:0 50%;color:#1e1e1e;font-weight:bold;">11</div>
<div class="t" style="left:592.4px;top:512.50px;font-size:10.0px;line-height:12.0px;transform:scaleX(0.937);transform-origin:0 50%;color:#1e1e1e;">Minimum Wage Earner (MWE) whose compensation is exempt from</div>
<div class="t" style="left:592.4px;top:523.40px;font-size:10.0px;line-height:12.0px;transform:scaleX(0.937);transform-origin:0 50%;color:#1e1e1e;">withholding tax and not subject to income tax</div>
<div class="t" style="left:644.4px;top:534.86px;font-size:10.4px;line-height:12.48px;transform:scaleX(0.892);transform-origin:0 50%;color:#1e1e1e;font-weight:bold;">Part II - Employer Information</div>
<div class="t" style="left:779px;top:536.78px;font-size:8.2px;line-height:9.84px;transform:scaleX(0.940);transform-origin:0 50%;color:#1e1e1e;font-weight:bold;font-style:italic;">(Present)</div>
<div class="t" style="left:552.3px;top:547.30px;font-size:10.0px;line-height:12.0px;transform:scaleX(0.920);transform-origin:0 50%;color:#1e1e1e;font-weight:bold;">12</div>
<div class="t" style="left:570.3px;top:547.30px;font-size:10.0px;line-height:12.0px;transform:scaleX(0.937);transform-origin:0 50%;color:#1e1e1e;">TIN</div>
<div class="t" style="left:552.3px;top:571.70px;font-size:10.0px;line-height:12.0px;transform:scaleX(0.920);transform-origin:0 50%;color:#1e1e1e;font-weight:bold;">13</div>
<div class="t" style="left:565px;top:571.70px;font-size:10.0px;line-height:12.0px;transform:scaleX(0.937);transform-origin:0 50%;color:#1e1e1e;">Employer's Name</div>
<div class="t" style="left:552.3px;top:605.20px;font-size:10.0px;line-height:12.0px;transform:scaleX(0.920);transform-origin:0 50%;color:#1e1e1e;font-weight:bold;">14</div>
<div class="t" style="left:565px;top:605.20px;font-size:10.0px;line-height:12.0px;transform:scaleX(0.937);transform-origin:0 50%;color:#1e1e1e;">Registered Address</div>
<div class="t" style="left:836.5px;top:605.20px;font-size:10.0px;line-height:12.0px;transform:scaleX(0.920);transform-origin:0 50%;color:#1e1e1e;font-weight:bold;">14A</div>
<div class="t" style="left:857px;top:605.20px;font-size:10.0px;line-height:12.0px;transform:scaleX(0.937);transform-origin:0 50%;color:#1e1e1e;">ZIP Code</div>
<div class="t" style="left:552.3px;top:638.70px;font-size:10.0px;line-height:12.0px;transform:scaleX(0.920);transform-origin:0 50%;color:#1e1e1e;font-weight:bold;">15</div>
<div class="t" style="left:570.3px;top:638.70px;font-size:10.0px;line-height:12.0px;transform:scaleX(0.937);transform-origin:0 50%;color:#1e1e1e;">Type of Employer</div>
<div class="t" style="left:676.2px;top:641.80px;font-size:10.0px;line-height:12.0px;transform:scaleX(0.937);transform-origin:0 50%;color:#1e1e1e;">Main Employer</div>
<div class="t" style="left:783.1px;top:641.80px;font-size:10.0px;line-height:12.0px;transform:scaleX(0.937);transform-origin:0 50%;color:#1e1e1e;">Secondary Employer</div>
<div class="t" style="left:640.6px;top:658.16px;font-size:10.4px;line-height:12.48px;transform:scaleX(0.892);transform-origin:0 50%;color:#1e1e1e;font-weight:bold;">Part III - Employer Information</div>
<div class="t" style="left:778px;top:660.08px;font-size:8.2px;line-height:9.84px;transform:scaleX(0.940);transform-origin:0 50%;color:#1e1e1e;font-weight:bold;font-style:italic;">(Previous)</div>
<div class="t" style="left:552.3px;top:671.00px;font-size:10.0px;line-height:12.0px;transform:scaleX(0.920);transform-origin:0 50%;color:#1e1e1e;font-weight:bold;">16</div>
<div class="t" style="left:570.3px;top:671.00px;font-size:10.0px;line-height:12.0px;transform:scaleX(0.937);transform-origin:0 50%;color:#1e1e1e;">TIN</div>
<div class="t" style="left:552.3px;top:695.40px;font-size:10.0px;line-height:12.0px;transform:scaleX(0.920);transform-origin:0 50%;color:#1e1e1e;font-weight:bold;">17</div>
<div class="t" style="left:565px;top:695.40px;font-size:10.0px;line-height:12.0px;transform:scaleX(0.937);transform-origin:0 50%;color:#1e1e1e;">Employer's Name</div>
<div class="t" style="left:552.3px;top:729.00px;font-size:10.0px;line-height:12.0px;transform:scaleX(0.920);transform-origin:0 50%;color:#1e1e1e;font-weight:bold;">18</div>
<div class="t" style="left:565px;top:729.00px;font-size:10.0px;line-height:12.0px;transform:scaleX(0.937);transform-origin:0 50%;color:#1e1e1e;">Registered Address</div>
<div class="t" style="left:836.5px;top:729.00px;font-size:10.0px;line-height:12.0px;transform:scaleX(0.920);transform-origin:0 50%;color:#1e1e1e;font-weight:bold;">18A</div>
<div class="t" style="left:857px;top:729.00px;font-size:10.0px;line-height:12.0px;transform:scaleX(0.937);transform-origin:0 50%;color:#1e1e1e;">ZIP Code</div>
<div class="t" style="left:914.75px;top:237.40px;font-size:10.0px;line-height:12.0px;transform:scaleX(0.920);transform-origin:0 50%;color:#1e1e1e;font-weight:bold;">2</div>
<div class="t" style="left:927.75px;top:237.40px;font-size:10.0px;line-height:12.0px;transform:scaleX(0.937);transform-origin:0 50%;color:#1e1e1e;">For the Period</div>
<div class="t" style="left:927.75px;top:248.90px;font-size:10.0px;line-height:12.0px;transform:scaleX(0.937);transform-origin:0 50%;color:#1e1e1e;">From</div>
<div class="t" style="left:952px;top:250.58px;font-size:8.2px;line-height:9.84px;transform:scaleX(0.940);transform-origin:0 50%;color:#1e1e1e;font-style:italic;">(MM/DD)</div>
<div class="a" style="left:1003px;top:238px;width:90.8px;height:19.3px;background:#d6e6fe;border-left:1px solid #6a6a6a;border-top:1px solid #a9c3f1;border-bottom:1px solid #555a64;border-right:1px solid #a9bde6;"></div>
<div class="a" style="left:1025.7px;top:250.3px;width:1px;height:6px;background:#b3bfd2"></div>
<div class="a" style="left:1071px;top:250.3px;width:1px;height:6px;background:#b3bfd2"></div>
<div class="a" style="left:1048px;top:238px;width:1.2px;height:19.3px;background:#5d7fc0"></div>
<div class="t" style="left:1105.6px;top:248.90px;font-size:10.0px;line-height:12.0px;transform:scaleX(0.937);transform-origin:0 50%;color:#1e1e1e;">To</div>
<div class="t" style="left:1119px;top:250.58px;font-size:8.2px;line-height:9.84px;transform:scaleX(0.940);transform-origin:0 50%;color:#1e1e1e;font-style:italic;">(MM/DD)</div>
<div class="a" style="left:1164.6px;top:238px;width:90.8px;height:19.3px;background:#d6e6fe;border-left:1px solid #6a6a6a;border-top:1px solid #a9c3f1;border-bottom:1px solid #555a64;border-right:1px solid #a9bde6;"></div>
<div class="a" style="left:1187.3px;top:250.3px;width:1px;height:6px;background:#b3bfd2"></div>
<div class="a" style="left:1232.6px;top:250.3px;width:1px;height:6px;background:#b3bfd2"></div>
<div class="a" style="left:1209.5px;top:238px;width:1.2px;height:19.3px;background:#5d7fc0"></div>
<div class="t" style="left:927.75px;top:261.58px;font-size:9.7px;line-height:11.64px;transform:scaleX(0.842);transform-origin:0 50%;color:#1e1e1e;font-weight:bold;">Part IV-B Details of Compensation Income &amp; Tax Withheld from Present Employer</div>
<div class="t" style="left:914px;top:279.54px;font-size:8.6px;line-height:10.32px;transform:scaleX(0.889);transform-origin:0 50%;color:#1e1e1e;font-weight:bold;">A. NON-TAXABLE/EXEMPT COMPENSATION INCOME</div>
<div class="t" style="left:1172px;top:279.00px;font-size:10.0px;line-height:12.0px;transform:scaleX(0.937);transform-origin:0 50%;color:#1e1e1e;">Amount</div>
<div class="t" style="left:912px;top:298.00px;font-size:10.0px;line-height:12.0px;transform:scaleX(0.920);transform-origin:0 50%;color:#1e1e1e;font-weight:bold;">27</div>
<div class="t" style="left:927.6px;top:299.34px;font-size:8.6px;line-height:10.32px;transform:scaleX(0.888);transform-origin:0 50%;color:#1e1e1e;">Basic Salary (including the exempt P250,000&nbsp; &amp; below)</div>
<div class="t" style="left:927.6px;top:310.84px;font-size:8.6px;line-height:10.32px;transform:scaleX(0.888);transform-origin:0 50%;color:#1e1e1e;">or the Statutory Minimum Wage of the MWE</div>
<div class="a" style="left:1128px;top:299px;width:132px;height:19.7px;background:#d6e6fe;border:1px solid #6c6c6c;box-shadow:inset 1px 1px 0 #6778a8, inset 0 -1px 0 #eef4ff, inset 0 -2px 0 #b7ccf3;"></div>
<div class="t" style="left:912px;top:328.30px;font-size:10.0px;line-height:12.0px;transform:scaleX(0.920);transform-origin:0 50%;color:#1e1e1e;font-weight:bold;">28</div>
<div class="t" style="left:927.6px;top:328.30px;font-size:10.0px;line-height:12.0px;transform:scaleX(0.937);transform-origin:0 50%;color:#1e1e1e;">Holiday Pay (MWE)</div>
<div class="a" style="left:1128px;top:323.5px;width:132px;height:19.5px;background:#d6e6fe;border:1px solid #6c6c6c;box-shadow:inset 1px 1px 0 #6778a8, inset 0 -1px 0 #eef4ff, inset 0 -2px 0 #b7ccf3;"></div>
<div class="t" style="left:912px;top:353.50px;font-size:10.0px;line-height:12.0px;transform:scaleX(0.920);transform-origin:0 50%;color:#1e1e1e;font-weight:bold;">29</div>
<div class="t" style="left:927.6px;top:353.50px;font-size:10.0px;line-height:12.0px;transform:scaleX(0.937);transform-origin:0 50%;color:#1e1e1e;">Overtime Pay (MWE)</div>
<div class="a" style="left:1128px;top:349px;width:132px;height:19.7px;background:#d6e6fe;border:1px solid #6c6c6c;box-shadow:inset 1px 1px 0 #6778a8, inset 0 -1px 0 #eef4ff, inset 0 -2px 0 #b7ccf3;"></div>
<div class="t" style="left:912px;top:379.00px;font-size:10.0px;line-height:12.0px;transform:scaleX(0.920);transform-origin:0 50%;color:#1e1e1e;font-weight:bold;">30</div>
<div class="t" style="left:927.6px;top:379.00px;font-size:10.0px;line-height:12.0px;transform:scaleX(0.937);transform-origin:0 50%;color:#1e1e1e;">Night Shift Differential (MWE)</div>
<div class="a" style="left:1128px;top:374.8px;width:132px;height:19.2px;background:#d6e6fe;border:1px solid #6c6c6c;box-shadow:inset 1px 1px 0 #6778a8, inset 0 -1px 0 #eef4ff, inset 0 -2px 0 #b7ccf3;"></div>
<div class="t" style="left:912px;top:405.50px;font-size:10.0px;line-height:12.0px;transform:scaleX(0.920);transform-origin:0 50%;color:#1e1e1e;font-weight:bold;">31</div>
<div class="t" style="left:927.6px;top:405.50px;font-size:10.0px;line-height:12.0px;transform:scaleX(0.937);transform-origin:0 50%;color:#1e1e1e;">Hazard Pay (MWE)</div>
<div class="a" style="left:1128px;top:400.7px;width:132px;height:19.3px;background:#d6e6fe;border:1px solid #6c6c6c;box-shadow:inset 1px 1px 0 #6778a8, inset 0 -1px 0 #eef4ff, inset 0 -2px 0 #b7ccf3;"></div>
<div class="t" style="left:912px;top:423.80px;font-size:10.0px;line-height:12.0px;transform:scaleX(0.920);transform-origin:0 50%;color:#1e1e1e;font-weight:bold;">32</div>
<div class="t" style="left:927.6px;top:423.80px;font-size:10.0px;line-height:12.0px;transform:scaleX(0.937);transform-origin:0 50%;color:#1e1e1e;">13th Month Pay and Other Benefits</div>
<div class="t" style="left:927.6px;top:436.92px;font-size:7.64px;line-height:9.17px;color:#1e1e1e;font-style:italic;">(maximum of P90,000)</div>
<div class="a" style="left:1128px;top:425.6px;width:132px;height:19.4px;background:#d6e6fe;border:1px solid #6c6c6c;box-shadow:inset 1px 1px 0 #6778a8, inset 0 -1px 0 #eef4ff, inset 0 -2px 0 #b7ccf3;"></div>
<div class="t" style="left:912px;top:454.30px;font-size:10.0px;line-height:12.0px;transform:scaleX(0.920);transform-origin:0 50%;color:#1e1e1e;font-weight:bold;">33</div>
<div class="t" style="left:927.6px;top:454.30px;font-size:10.0px;line-height:12.0px;transform:scaleX(0.937);transform-origin:0 50%;color:#1e1e1e;">De Minimis Benefits</div>
<div class="a" style="left:1128px;top:450.5px;width:132px;height:19.0px;background:#d6e6fe;border:1px solid #6c6c6c;box-shadow:inset 1px 1px 0 #6778a8, inset 0 -1px 0 #eef4ff, inset 0 -2px 0 #b7ccf3;"></div>
<div class="t" style="left:912px;top:472.50px;font-size:10.0px;line-height:12.0px;transform:scaleX(0.920);transform-origin:0 50%;color:#1e1e1e;font-weight:bold;">34</div>
<div class="t" style="left:927.6px;top:472.50px;font-size:10.0px;line-height:12.0px;transform:scaleX(0.937);transform-origin:0 50%;color:#1e1e1e;">SSS, GSIS, PHIC &amp; PAG-IBIG Contributions</div>
<div class="t" style="left:927.6px;top:485.20px;font-size:10.0px;line-height:12.0px;transform:scaleX(0.937);transform-origin:0 50%;color:#1e1e1e;">and Union Dues</div>
<div class="t" style="left:997.5px;top:485.58px;font-size:9.37px;line-height:11.24px;color:#1e1e1e;font-style:italic;">(Employee share only)</div>
<div class="a" style="left:1128px;top:475.6px;width:132px;height:18.8px;background:#d6e6fe;border:1px solid #6c6c6c;box-shadow:inset 1px 1px 0 #6778a8, inset 0 -1px 0 #eef4ff, inset 0 -2px 0 #b7ccf3;"></div>
<div class="t" style="left:912px;top:503.50px;font-size:10.0px;line-height:12.0px;transform:scaleX(0.920);transform-origin:0 50%;color:#1e1e1e;font-weight:bold;">35</div>
<div class="t" style="left:927.6px;top:503.50px;font-size:10.0px;line-height:12.0px;transform:scaleX(0.937);transform-origin:0 50%;color:#1e1e1e;">Salaries and Other Forms of Compensation</div>
<div class="a" style="left:1128px;top:500px;width:132px;height:19px;background:#d6e6fe;border:1px solid #6c6c6c;box-shadow:inset 1px 1px 0 #6778a8, inset 0 -1px 0 #eef4ff, inset 0 -2px 0 #b7ccf3;"></div>
<div class="t" style="left:912px;top:523.80px;font-size:10.0px;line-height:12.0px;transform:scaleX(0.920);transform-origin:0 50%;color:#1e1e1e;font-weight:bold;">36</div>
<div class="t" style="left:927.6px;top:523.80px;font-size:10.0px;line-height:12.0px;transform:scaleX(0.937);transform-origin:0 50%;color:#1e1e1e;">Total Non-Taxable/Exempt Compensation</div>
<div class="t" style="left:930.3px;top:535.50px;font-size:10.0px;line-height:12.0px;transform:scaleX(0.937);transform-origin:0 50%;color:#1e1e1e;">Income</div>
<div class="t" style="left:963.5px;top:537.41px;font-size:7.64px;line-height:9.17px;color:#1e1e1e;font-style:italic;">(Sum of Items 27 to 35)</div>
<div class="a" style="left:1128px;top:524.4px;width:132px;height:19.6px;background:#d6e6fe;border:1px solid #6c6c6c;box-shadow:inset 1px 1px 0 #6778a8, inset 0 -1px 0 #eef4ff, inset 0 -2px 0 #b7ccf3;"></div>
<div class="t" style="left:912px;top:576.90px;font-size:10.0px;line-height:12.0px;transform:scaleX(0.920);transform-origin:0 50%;color:#1e1e1e;font-weight:bold;">37</div>
<div class="t" style="left:927.6px;top:576.90px;font-size:10.0px;line-height:12.0px;transform:scaleX(0.937);transform-origin:0 50%;color:#1e1e1e;">Basic Salary</div>
<div class="a" style="left:1128px;top:573px;width:132px;height:19.2px;background:#d6e6fe;border:1px solid #6c6c6c;box-shadow:inset 1px 1px 0 #6778a8, inset 0 -1px 0 #eef4ff, inset 0 -2px 0 #b7ccf3;"></div>
<div class="t" style="left:912px;top:602.10px;font-size:10.0px;line-height:12.0px;transform:scaleX(0.920);transform-origin:0 50%;color:#1e1e1e;font-weight:bold;">38</div>
<div class="t" style="left:927.6px;top:602.10px;font-size:10.0px;line-height:12.0px;transform:scaleX(0.937);transform-origin:0 50%;color:#1e1e1e;">Representation</div>
<div class="a" style="left:1128px;top:597.8px;width:132px;height:19.5px;background:#d6e6fe;border:1px solid #6c6c6c;box-shadow:inset 1px 1px 0 #6778a8, inset 0 -1px 0 #eef4ff, inset 0 -2px 0 #b7ccf3;"></div>
<div class="t" style="left:912px;top:626.50px;font-size:10.0px;line-height:12.0px;transform:scaleX(0.920);transform-origin:0 50%;color:#1e1e1e;font-weight:bold;">39</div>
<div class="t" style="left:927.6px;top:626.50px;font-size:10.0px;line-height:12.0px;transform:scaleX(0.937);transform-origin:0 50%;color:#1e1e1e;">Transportation</div>
<div class="a" style="left:1128px;top:622.7px;width:132px;height:19.3px;background:#d6e6fe;border:1px solid #6c6c6c;box-shadow:inset 1px 1px 0 #6778a8, inset 0 -1px 0 #eef4ff, inset 0 -2px 0 #b7ccf3;"></div>
<div class="t" style="left:912px;top:651.50px;font-size:10.0px;line-height:12.0px;transform:scaleX(0.920);transform-origin:0 50%;color:#1e1e1e;font-weight:bold;">40</div>
<div class="t" style="left:927.6px;top:651.50px;font-size:10.0px;line-height:12.0px;transform:scaleX(0.937);transform-origin:0 50%;color:#1e1e1e;">Cost of Living Allowance (COLA)</div>
<div class="a" style="left:1128px;top:647.3px;width:132px;height:20.0px;background:#d6e6fe;border:1px solid #6c6c6c;box-shadow:inset 1px 1px 0 #6778a8, inset 0 -1px 0 #eef4ff, inset 0 -2px 0 #b7ccf3;"></div>
<div class="t" style="left:912px;top:676.00px;font-size:10.0px;line-height:12.0px;transform:scaleX(0.920);transform-origin:0 50%;color:#1e1e1e;font-weight:bold;">41</div>
<div class="t" style="left:927.6px;top:676.00px;font-size:10.0px;line-height:12.0px;transform:scaleX(0.937);transform-origin:0 50%;color:#1e1e1e;">Fixed Housing Allowance</div>
<div class="a" style="left:1128px;top:672.2px;width:132px;height:19.5px;background:#d6e6fe;border:1px solid #6c6c6c;box-shadow:inset 1px 1px 0 #6778a8, inset 0 -1px 0 #eef4ff, inset 0 -2px 0 #b7ccf3;"></div>
<div class="t" style="left:912px;top:553.64px;font-size:8.6px;line-height:10.32px;transform:scaleX(0.889);transform-origin:0 50%;color:#1e1e1e;font-weight:bold;">B. TAXABLE COMPENSATION INCOME REGULAR</div>
<div class="t" style="left:912px;top:695.50px;font-size:10.0px;line-height:12.0px;transform:scaleX(0.920);transform-origin:0 50%;color:#1e1e1e;font-weight:bold;">42</div>
<div class="t" style="left:927.6px;top:695.50px;font-size:10.0px;line-height:12.0px;transform:scaleX(0.937);transform-origin:0 50%;color:#1e1e1e;">Others</div>
<div class="t" style="left:958.5px;top:697.41px;font-size:7.64px;line-height:9.17px;color:#1e1e1e;font-style:italic;">(specify)</div>
<div class="t" style="left:924.4px;top:711.30px;font-size:10.0px;line-height:12.0px;transform:scaleX(0.920);transform-origin:0 50%;color:#1e1e1e;font-weight:bold;">42A</div>
<div class="a" style="left:945px;top:707.6px;width:172px;height:20.0px;background:#d6e6fe;border:1px solid #6c6c6c;box-shadow:inset 1px 1px 0 #6778a8, inset 0 -1px 0 #eef4ff, inset 0 -2px 0 #b7ccf3;"></div>
<div class="a" style="left:1128px;top:707.6px;width:132px;height:20.0px;background:#d6e6fe;border:1px solid #6c6c6c;box-shadow:inset 1px 1px 0 #6778a8, inset 0 -1px 0 #eef4ff, inset 0 -2px 0 #b7ccf3;"></div>
<div class="t" style="left:924.4px;top:733.00px;font-size:10.0px;line-height:12.0px;transform:scaleX(0.920);transform-origin:0 50%;color:#1e1e1e;font-weight:bold;">42B</div>
<div class="a" style="left:945px;top:731.5px;width:172px;height:20.5px;background:#d6e6fe;border:1px solid #6c6c6c;box-shadow:inset 1px 1px 0 #6778a8, inset 0 -1px 0 #eef4ff, inset 0 -2px 0 #b7ccf3;"></div>
<div class="a" style="left:1128px;top:731.5px;width:132px;height:20.5px;background:#d6e6fe;border:1px solid #6c6c6c;box-shadow:inset 1px 1px 0 #6778a8, inset 0 -1px 0 #eef4ff, inset 0 -2px 0 #b7ccf3;"></div>
</div></div>
<svg class="a" style="left:1515px;top:18px" width="66" height="66" viewBox="1515 18 66 66">
<clipPath id="sq"><rect x="1520" y="23.5" width="55.5" height="55.5" rx="5"/></clipPath>
<g clip-path="url(#sq)" stroke="#fb4351" stroke-width="4.6" fill="none">
<path d="M1539 20 C1539 40 1536 55 1532 63 L1526 82"/>
<path d="M1541 20 C1547 35 1556 50 1566 54 L1578 55"/>
<path d="M1517 70 C1530 62 1546 58 1563 56 L1578 64"/>
</g></svg>
<svg class="a" style="left:1500px;top:570px" width="100" height="140" viewBox="1500 570 100 140"><g fill="#0a1c58">
<path d="M1527 586 C1528 582 1531 581 1533 585 C1535 580 1540 580 1542 584 C1546 586 1547 594 1543 598 C1539 603 1530 602 1527 597 C1524 594 1524 590 1527 586 Z"/>
<path d="M1564.5 595 C1568 595 1570 599 1571 605.6 C1573 596 1577 590 1582 590 C1587 590 1589 597 1588.7 604 C1588 617 1581 626 1573.8 626 C1565 626 1559 618 1559 607 C1559 600 1561 595 1564.5 595 Z"/>
<path d="M1500 603 C1504 606 1505 618 1500 623 Z"/>
<path d="M1517 613 C1521 613 1523 620 1524.5 630 C1526 622 1529 614 1533.8 614 C1539 614 1542 624 1541.5 636 C1541 646 1535 652 1527 652 C1517 652 1510 644 1510 632 C1510 621 1513 613 1517 613 Z"/>
<path d="M1547.7 653 C1551 653 1553 658 1554.2 662.4 C1556 652 1560 644 1564.5 644 C1569 644 1571 651 1571 660 C1571 670 1564 676.4 1556 676.4 C1548 676.4 1543 670 1543 662 C1543 657 1545 653 1547.7 653 Z"/>
<path d="M1500 665 C1504 667 1506 675 1508.6 682 C1512 676 1516 671 1521.7 671 C1526 671 1527 679 1526.9 687 C1526 696 1519 702.5 1510.5 702.5 C1505 702.5 1502 700 1500 698 Z"/>
</g></svg>
<svg class="a" style="left:40px;top:735px" width="140" height="80" viewBox="40 735 140 80"><g stroke="#fff" stroke-width="1.2" fill="none" stroke-linecap="round">
<path d="M68 744 L87 765"/><path d="M52 767 L72 789"/><path d="M60 770 L83 795"/>
<path d="M120 740 C140 760 155 785 166 812" stroke-width="0.8"/>
</g></svg>
<svg class="a" style="left:400px;top:550px" width="150" height="140" viewBox="400 550 150 140">
<path d="M432 634 C445 596 480 570 536 567" stroke="#fb4351" stroke-width="3.4" fill="none" stroke-linecap="round"/>
<path d="M526 557 L537 567 L526 577" stroke="#fb4351" stroke-width="3.4" fill="none" stroke-linecap="round" stroke-linejoin="round"/>
<circle cx="429" cy="663.5" r="21" fill="#fb4351"/>
</svg>
<div class="a" style="left:409px;top:643.5px;width:40px;height:40px;text-align:center;color:#fff;font-size:33.5px;line-height:40px;-webkit-text-stroke:0.4px #fff;transform:scaleX(0.96)">2</div>
<svg class="a" style="left:115px;top:285px" width="125" height="145" viewBox="115 285 125 145"><rect x="121" y="292" width="110" height="131" rx="2" fill="#fff" stroke="#4a83ea" stroke-width="2"/><rect x="129" y="296" width="8" height="0.6" fill="#aaa"/><circle cx="163" cy="296.5" r="1.8" fill="#666"/><rect x="168" y="295.5" width="14" height="0.8" fill="#777"/><rect x="126" y="299.5" width="102" height="6" fill="#fff" stroke="#202020" stroke-width="0.675"/><rect x="127" y="300.5" width="12" height="4" fill="#fff" stroke="#202020" stroke-width="0.675"/><rect x="130" y="302" width="6" height="0.9" fill="#333"/><rect x="151" y="300.5" width="26" height="0.7" fill="#555"/><rect x="156" y="302.5" width="18" height="0.7" fill="#777"/><rect x="199" y="300.8" width="1.6" height="3.4" fill="#222"/><rect x="202" y="300.8" width="1.6" height="3.4" fill="#222"/><rect x="204" y="300.8" width="1.6" height="3.4" fill="#222"/><rect x="207" y="300.8" width="1.6" height="3.4" fill="#222"/><rect x="210" y="300.8" width="1.6" height="3.4" fill="#222"/><rect x="212" y="300.8" width="1.6" height="3.4" fill="#222"/><rect x="215" y="300.5" width="12" height="4" fill="#fff" stroke="#202020" stroke-width="0.675"/><rect x="217" y="301.5" width="8" height="2" fill="#333"/><rect x="126" y="306" width="102" height="89" fill="#cfcfcf" stroke="#202020" stroke-width="0.945"/><line x1="176.5" y1="306" x2="176.5" y2="395" stroke="#333" stroke-width=".6"/><rect x="141" y="307" width="14" height="3" fill="#fff" stroke="#202020" stroke-width="0.81"/><rect x="129" y="308" width="8" height="0.7" fill="#8a8a8a"/><rect x="134" y="311.3" width="11" height="2.4" fill="#f4f4f4" stroke="#202020" stroke-width="0.675"/><rect x="147" y="311.3" width="8" height="2.4" fill="#f4f4f4" stroke="#202020" stroke-width="0.675"/><rect x="157" y="311.3" width="9" height="2.4" fill="#f4f4f4" stroke="#202020" stroke-width="0.675"/><rect x="168" y="311.3" width="7" height="2.4" fill="#f4f4f4" stroke="#202020" stroke-width="0.675"/><rect x="127" y="315.5" width="38" height="3" fill="#f4f4f4" stroke="#202020" stroke-width="0.675"/><rect x="167" y="315.5" width="8.5" height="3" fill="#f4f4f4" stroke="#202020" stroke-width="0.675"/><rect x="127" y="320" width="38" height="3" fill="#f4f4f4" stroke="#202020" stroke-width="0.675"/><rect x="167" y="320" width="8.5" height="3" fill="#f4f4f4" stroke="#202020" stroke-width="0.675"/><rect x="127" y="324.5" width="38" height="3" fill="#f4f4f4" stroke="#202020" stroke-width="0.675"/><rect x="167" y="324.5" width="8.5" height="3" fill="#f4f4f4" stroke="#202020" stroke-width="0.675"/><rect x="127" y="329" width="48.5" height="3" fill="#f4f4f4" stroke="#202020" stroke-width="0.675"/><rect x="128" y="334" width="17" height="2.5" fill="#f4f4f4" stroke="#202020" stroke-width="0.675"/><rect x="148" y="334" width="27.5" height="2.5" fill="#f4f4f4" stroke="#202020" stroke-width="0.675"/><rect x="158" y="338.5" width="17.5" height="2.5" fill="#f4f4f4" stroke="#202020" stroke-width="0.675"/><rect x="158" y="342" width="17.5" height="2.5" fill="#f4f4f4" stroke="#202020" stroke-width="0.675"/><rect x="128" y="344.5" width="3.5" height="2.5" fill="#fff" stroke="#202020" stroke-width="0.675"/><rect x="134" y="348.5" width="11" height="2.4" fill="#f4f4f4" stroke="#202020" stroke-width="0.675"/><rect x="147" y="348.5" width="8" height="2.4" fill="#f4f4f4" stroke="#202020" stroke-width="0.675"/><rect x="157" y="348.5" width="9" height="2.4" fill="#f4f4f4" stroke="#202020" stroke-width="0.675"/><rect x="168" y="348.5" width="7" height="2.4" fill="#f4f4f4" stroke="#202020" stroke-width="0.675"/><rect x="127" y="352.5" width="48.5" height="3" fill="#f4f4f4" stroke="#202020" stroke-width="0.675"/><rect x="127" y="357" width="38" height="3" fill="#f4f4f4" stroke="#202020" stroke-width="0.675"/><rect x="167" y="357" width="8.5" height="3" fill="#f4f4f4" stroke="#202020" stroke-width="0.675"/><rect x="142" y="361" width="3" height="2.5" fill="#fff" stroke="#202020" stroke-width="0.675"/><rect x="155" y="361" width="3" height="2.5" fill="#fff" stroke="#202020" stroke-width="0.675"/><rect x="134" y="364.5" width="11" height="2.4" fill="#f4f4f4" stroke="#202020" stroke-width="0.675"/><rect x="147" y="364.5" width="8" height="2.4" fill="#f4f4f4" stroke="#202020" stroke-width="0.675"/><rect x="157" y="364.5" width="9" height="2.4" fill="#f4f4f4" stroke="#202020" stroke-width="0.675"/><rect x="168" y="364.5" width="7" height="2.4" fill="#f4f4f4" stroke="#202020" stroke-width="0.675"/><rect x="127" y="368.5" width="48.5" height="3" fill="#f4f4f4" stroke="#202020" stroke-width="0.675"/><rect x="127" y="373" width="38" height="3" fill="#f4f4f4" stroke="#202020" stroke-width="0.675"/><rect x="167" y="373" width="8.5" height="3" fill="#f4f4f4" stroke="#202020" stroke-width="0.675"/><rect x="157" y="377.0" width="18.5" height="1.8" fill="#f0f0f0" stroke="#202020" stroke-width="0.6075"/><rect x="128" y="377.6" width="27" height="0.6" fill="#999"/><rect x="157" y="379.2" width="18.5" height="1.8" fill="#f0f0f0" stroke="#202020" stroke-width="0.6075"/><rect x="128" y="379.8" width="22" height="0.6" fill="#999"/><rect x="157" y="381.4" width="18.5" height="1.8" fill="#f0f0f0" stroke="#202020" stroke-width="0.6075"/><rect x="128" y="382.0" width="27" height="0.6" fill="#999"/><rect x="157" y="383.6" width="18.5" height="1.8" fill="#f0f0f0" stroke="#202020" stroke-width="0.6075"/><rect x="128" y="384.20000000000005" width="22" height="0.6" fill="#999"/><rect x="157" y="385.8" width="18.5" height="1.8" fill="#f0f0f0" stroke="#202020" stroke-width="0.6075"/><rect x="128" y="386.40000000000003" width="27" height="0.6" fill="#999"/><rect x="157" y="388.0" width="18.5" height="1.8" fill="#f0f0f0" stroke="#202020" stroke-width="0.6075"/><rect x="128" y="388.6" width="22" height="0.6" fill="#999"/><rect x="157" y="390.2" width="18.5" height="1.8" fill="#f0f0f0" stroke="#202020" stroke-width="0.6075"/><rect x="128" y="390.8" width="27" height="0.6" fill="#999"/><rect x="157" y="392.4" width="18.5" height="1.8" fill="#f0f0f0" stroke="#202020" stroke-width="0.6075"/><rect x="128" y="393.0" width="22" height="0.6" fill="#999"/><rect x="128" y="314.5" width="14" height="0.5" fill="#666"/><rect x="128" y="319" width="14" height="0.5" fill="#666"/><rect x="128" y="323.5" width="14" height="0.5" fill="#666"/><rect x="128" y="328" width="14" height="0.5" fill="#666"/><rect x="128" y="333" width="14" height="0.5" fill="#666"/><rect x="128" y="337.5" width="14" height="0.5" fill="#666"/><rect x="128" y="347.5" width="14" height="0.5" fill="#666"/><rect x="128" y="351.5" width="14" height="0.5" fill="#666"/><rect x="128" y="356" width="14" height="0.5" fill="#666"/><rect x="128" y="360.5" width="14" height="0.5" fill="#666"/><rect x="128" y="363.5" width="14" height="0.5" fill="#666"/><rect x="128" y="367.5" width="14" height="0.5" fill="#666"/><rect x="128" y="372" width="14" height="0.5" fill="#666"/><rect x="179" y="307.5" width="10" height="0.6" fill="#8a8a8a"/><rect x="190" y="306.5" width="12" height="2.6" fill="#f4f4f4" stroke="#202020" stroke-width="0.675"/><rect x="214" y="306.5" width="12.5" height="2.6" fill="#f4f4f4" stroke="#202020" stroke-width="0.675"/><rect x="179" y="311" width="46" height="0.8" fill="#555"/><rect x="208" y="313.5" width="19" height="2.8" fill="#f2f2f2" stroke="#202020" stroke-width="0.675"/><rect x="179" y="314.3" width="12" height="0.6" fill="#999"/><rect x="208" y="317.4" width="19" height="2.8" fill="#f2f2f2" stroke="#202020" stroke-width="0.675"/><rect x="179" y="318.2" width="19" height="0.6" fill="#999"/><rect x="208" y="321.3" width="19" height="2.8" fill="#f2f2f2" stroke="#202020" stroke-width="0.675"/><rect x="179" y="322.1" width="12" height="0.6" fill="#999"/><rect x="208" y="325.2" width="19" height="2.8" fill="#f2f2f2" stroke="#202020" stroke-width="0.675"/><rect x="179" y="326.0" width="19" height="0.6" fill="#999"/><rect x="208" y="329.1" width="19" height="2.8" fill="#f2f2f2" stroke="#202020" stroke-width="0.675"/><rect x="179" y="329.90000000000003" width="12" height="0.6" fill="#999"/><rect x="208" y="333.0" width="19" height="2.8" fill="#f2f2f2" stroke="#202020" stroke-width="0.675"/><rect x="179" y="333.8" width="19" height="0.6" fill="#999"/><rect x="208" y="336.9" width="19" height="2.8" fill="#f2f2f2" stroke="#202020" stroke-width="0.675"/><rect x="179" y="337.7" width="12" height="0.6" fill="#999"/><rect x="208" y="340.8" width="19" height="2.8" fill="#f2f2f2" stroke="#202020" stroke-width="0.675"/><rect x="179" y="341.6" width="19" height="0.6" fill="#999"/><rect x="208" y="344.7" width="19" height="2.8" fill="#f2f2f2" stroke="#202020" stroke-width="0.675"/><rect x="179" y="345.5" width="12" height="0.6" fill="#999"/><rect x="208" y="348.6" width="19" height="2.8" fill="#f2f2f2" stroke="#202020" stroke-width="0.675"/><rect x="179" y="349.40000000000003" width="19" height="0.6" fill="#999"/><rect x="179" y="354" width="22" height="0.6" fill="#777"/><rect x="208" y="357.0" width="19" height="3" fill="#f2f2f2" stroke="#202020" stroke-width="0.675"/><rect x="179" y="358.0" width="10" height="0.6" fill="#999"/><rect x="208" y="361.2" width="19" height="3" fill="#f2f2f2" stroke="#202020" stroke-width="0.675"/><rect x="179" y="362.2" width="15" height="0.6" fill="#999"/><rect x="208" y="365.4" width="19" height="3" fill="#f2f2f2" stroke="#202020" stroke-width="0.675"/><rect x="179" y="366.4" width="20" height="0.6" fill="#999"/><rect x="208" y="369.6" width="19" height="3" fill="#f2f2f2" stroke="#202020" stroke-width="0.675"/><rect x="179" y="370.6" width="13" height="0.6" fill="#999"/><rect x="208" y="373.8" width="19" height="3" fill="#f2f2f2" stroke="#202020" stroke-width="0.675"/><rect x="179" y="374.8" width="18" height="0.6" fill="#999"/><rect x="208" y="378.0" width="19" height="3" fill="#f2f2f2" stroke="#202020" stroke-width="0.675"/><rect x="179" y="379.0" width="11" height="0.6" fill="#999"/><rect x="208" y="382.2" width="19" height="3" fill="#f2f2f2" stroke="#202020" stroke-width="0.675"/><rect x="179" y="383.2" width="16" height="0.6" fill="#999"/><rect x="208" y="386.4" width="19" height="3" fill="#f2f2f2" stroke="#202020" stroke-width="0.675"/><rect x="179" y="387.4" width="21" height="0.6" fill="#999"/><rect x="183" y="365.5" width="21" height="2.6" fill="#f4f4f4" stroke="#202020" stroke-width="0.675"/><rect x="183" y="368.5" width="21" height="2.6" fill="#f4f4f4" stroke="#202020" stroke-width="0.675"/><rect x="183" y="388" width="21" height="2.6" fill="#f4f4f4" stroke="#202020" stroke-width="0.675"/><rect x="183" y="391" width="21" height="2.6" fill="#f4f4f4" stroke="#202020" stroke-width="0.675"/><rect x="126" y="395" width="102" height="24.5" fill="#fff" stroke="#202020" stroke-width="0.81"/><line x1="126" y1="406.5" x2="228" y2="406.5" stroke="#555" stroke-width=".6"/><line x1="176" y1="406.5" x2="176" y2="419.5" stroke="#555" stroke-width=".6"/><rect x="193" y="396.5" width="8" height="2.2" fill="#e4e4e4" stroke="#202020" stroke-width="0.6075"/><rect x="203" y="396.5" width="9" height="2.2" fill="#e4e4e4" stroke="#202020" stroke-width="0.6075"/><rect x="193" y="400" width="8" height="2.2" fill="#e4e4e4" stroke="#202020" stroke-width="0.6075"/><rect x="203" y="400" width="9" height="2.2" fill="#e4e4e4" stroke="#202020" stroke-width="0.6075"/><rect x="193" y="403.2" width="8" height="2.2" fill="#e4e4e4" stroke="#202020" stroke-width="0.6075"/><rect x="203" y="403.2" width="9" height="2.2" fill="#e4e4e4" stroke="#202020" stroke-width="0.6075"/><rect x="139" y="403.2" width="13" height="2.2" fill="#e4e4e4" stroke="#202020" stroke-width="0.6075"/><rect x="164" y="403.2" width="15" height="2.2" fill="#e4e4e4" stroke="#202020" stroke-width="0.6075"/><rect x="220" y="403.2" width="6" height="2.2" fill="#e4e4e4" stroke="#202020" stroke-width="0.6075"/><rect x="130" y="397.5" width="40" height="0.6" fill="#888"/><rect x="130" y="400.5" width="6" height="0.6" fill="#888"/><rect x="182" y="397.5" width="9" height="0.6" fill="#888"/><rect x="182" y="401" width="9" height="0.6" fill="#888"/><rect x="131" y="409" width="35" height="0.6" fill="#888"/><rect x="131" y="411.5" width="10" height="0.6" fill="#888"/><rect x="133" y="414" width="40" height="0.6" fill="#888"/><rect x="133" y="416.5" width="30" height="0.6" fill="#888"/><rect x="180" y="409" width="45" height="0.9" fill="#444"/><rect x="180" y="411.5" width="45" height="0.9" fill="#444"/><rect x="185" y="415" width="35" height="0.6" fill="#888"/><rect x="190" y="418" width="20" height="0.6" fill="#888"/></svg></body></html>
